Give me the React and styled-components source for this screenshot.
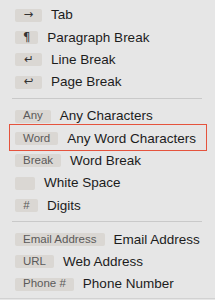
import React from 'react';
import styled, { createGlobalStyle } from 'styled-components';

const groups = [
  [
    { token: '→', label: 'Tab', glyph: true, width: 27 },
    { token: '¶', label: 'Paragraph Break', glyph: true, width: 23 },
    { token: '↵', label: 'Line Break', glyph: true, width: 27 },
    { token: '↩', label: 'Page Break', glyph: true, width: 27 },
  ],
  [
    { token: 'Any', label: 'Any Characters' },
    { token: 'Word', label: 'Any Word Characters', selected: true },
    { token: 'Break', label: 'Word Break' },
    { token: '', label: 'White Space', width: 20 },
    { token: '#', label: 'Digits', width: 23 },
  ],
  [
    { token: 'Email Address', label: 'Email Address' },
    { token: 'URL', label: 'Web Address' },
    { token: 'Phone #', label: 'Phone Number' },
  ],
];

const App = () => {
  return (
    <>
      <GlobalStyle />
      <Menu>
        {groups.map((group, gi) => (
          <React.Fragment key={gi}>
            {gi > 0 && <Separator />}
            <Group>
              {group.map((item) => (
                <Row key={item.label}>
                  <Token $glyph={item.glyph} $width={item.width}>
                    {item.token}
                  </Token>
                  <Label>{item.label}</Label>
                  {item.selected && <Highlight />}
                </Row>
              ))}
            </Group>
          </React.Fragment>
        ))}
      </Menu>
    </>
  );
};

export default App;

const GlobalStyle = createGlobalStyle`
  html, body {
    margin: 0;
    padding: 0;
    background-color: #e6e6e6;
  }
`;

const Menu = styled.div`
  box-sizing: border-box;
  width: 215px;
  height: 299px;
  padding-top: 4px;
  border-bottom: 1px solid #d2d2d2;
  background-color: #e6e6e6;
  font-family: 'Liberation Sans', Arial, sans-serif;
`;

const Group = styled.div`
  display: flex;
  flex-direction: column;
`;

const Row = styled.div`
  position: relative;
  display: flex;
  align-items: center;
  gap: 9px;
  height: 22.3px;
  padding-left: 15px;
`;

const Token = styled.span`
  display: flex;
  justify-content: center;
  align-items: center;
  box-sizing: border-box;
  height: 13px;
  min-width: ${(p) => (p.$width ? `${p.$width}px` : 'auto')};
  padding: 0 8px;
  border-radius: 2px;
  background-color: #dad7d3;
  color: ${(p) => (p.$glyph ? '#333333' : '#5a5a5a')};
  font-family: ${(p) =>
    p.$glyph ? "'DejaVu Sans', sans-serif" : "'Liberation Sans', Arial, sans-serif"};
  font-size: ${(p) => (p.$glyph ? '11.5px' : '11.5px')};
  line-height: 1;
  white-space: pre;
`;

const Label = styled.span`
  color: #1c1c1c;
  font-size: 13.5px;
  line-height: 1;
`;

const Highlight = styled.span`
  position: absolute;
  top: -3px;
  bottom: -1px;
  left: 9px;
  right: 8px;
  border: 1.5px solid #e5533d;
  pointer-events: none;
`;

const Separator = styled.div`
  height: 1px;
  margin: 4.5px 13px 6.3px 12px;
  background-color: #c9c9c9;
`;
